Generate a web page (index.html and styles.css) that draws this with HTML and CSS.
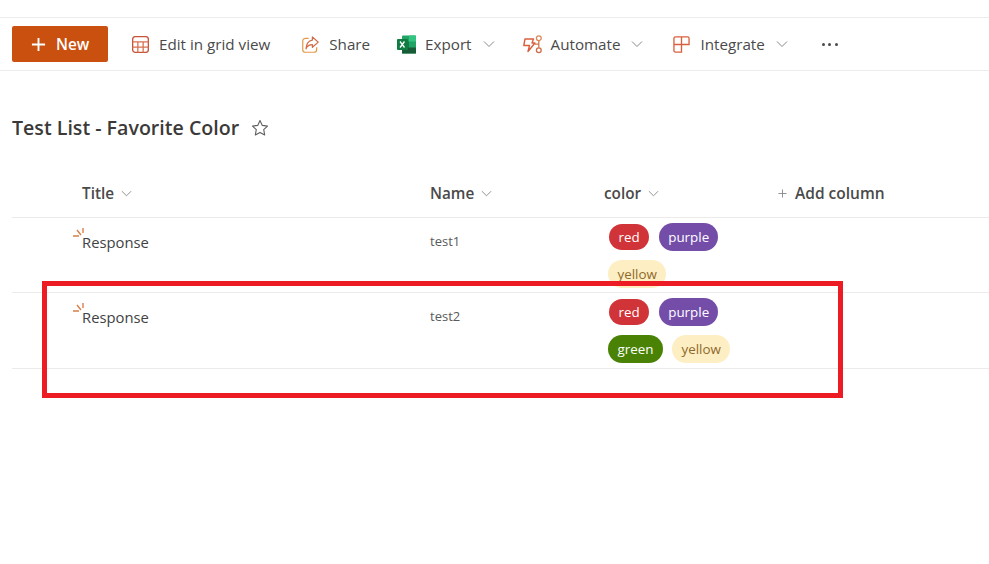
FILE: index.html
```html
<!DOCTYPE html>
<html lang="en">
<head>
<meta charset="utf-8">
<title>Test List - Favorite Color</title>
<link rel="stylesheet" href="styles.css">
</head>
<body>
<div class="page">
  <div class="toolbar">
    <button class="new-btn">
      <svg class="plus" viewBox="0 0 16 16"><path d="M8 1v14M1 8h14"/></svg>
      <span>New</span>
    </button>
    <div class="tool tool-grid">
      <svg class="ic" viewBox="1 1 16 16" fill="none"><rect x="1.600" y="1.600" width="14.800" height="14.800" rx="2.500" stroke="#c8553a" stroke-width="1.300"/><path d="M1.500 6.500h15M1.500 11.500h15M6.500 6.500v10M11.500 6.500v10" stroke="#d9714f" stroke-width="1.200"/></svg>
      <span>Edit in grid view</span>
    </div>
    <div class="tool tool-share">
      <svg class="ic" viewBox="0 0 18 18" fill="none"><path d="M7 2.500H3.500A2.700 2.700 0 0 0 .8 5.200v9.300a2.700 2.700 0 0 0 2.700 2.700h9.300a2.700 2.700 0 0 0 2.700-2.700V12" stroke="#e39a4a" stroke-width="1.300"/><path d="M11 1l6.200 5.500L11 12V9.200C8 9.200 5.500 10.500 4.300 13.500 4.500 8.500 7 5 11 4.300z" stroke="#cf6a45" stroke-width="1.300" stroke-linejoin="round"/></svg>
      <span>Share</span>
    </div>
    <div class="tool tool-export">
      <svg class="ic ic-xl" viewBox="0 0 19 19"><rect x="5" y="0.500" width="14" height="18" rx="1" fill="#21a366"/><rect x="12" y="0.500" width="7" height="6" fill="#33c481"/><rect x="5" y="6.500" width="7" height="6" fill="#107c41"/><rect x="12" y="12.500" width="7" height="6" fill="#185c37"/><rect x="5" y="12.500" width="7" height="6" fill="#185c37"/><rect x="0" y="4" width="11" height="11" rx="1" fill="#107c41"/><path d="M3 6.500l4.500 6M7.500 6.500l-4.500 6" stroke="#fff" stroke-width="1.300"/></svg>
      <span>Export</span>
      <svg class="chev" viewBox="0 0 12 12"><path d="M1 3.500l5 5 5-5"/></svg>
    </div>
    <div class="tool tool-auto">
      <svg class="ic ic-auto" viewBox="0 0 19 19" fill="none"><path d="M2 4h8.500L9 8h3l-7 8.500 1.500-6H.8z" stroke="#d9603f" stroke-width="1.400" stroke-linejoin="round"/><circle cx="15.800" cy="3.200" r="2.400" stroke="#d98a5a" stroke-width="1.300"/><circle cx="15.800" cy="15.200" r="2.400" stroke="#cf6a45" stroke-width="1.300"/><path d="M15.800 5.600v7.200M15.800 9.200h-4" stroke="#cf7a50" stroke-width="1.300"/></svg>
      <span>Automate</span>
      <svg class="chev" viewBox="0 0 12 12"><path d="M1 3.500l5 5 5-5"/></svg>
    </div>
    <div class="tool tool-integrate">
      <svg class="ic" viewBox="0 0 18 18" fill="none"><path d="M2.500 1h13a1.500 1.500 0 0 1 1.500 1.500V9H9v8H2.500A1.500 1.500 0 0 1 1 15.500v-13A1.500 1.500 0 0 1 2.500 1z" stroke="#d9603f" stroke-width="1.400"/><path d="M9 1v8H1" stroke="#d9603f" stroke-width="1.400"/></svg>
      <span>Integrate</span>
      <svg class="chev" viewBox="0 0 12 12"><path d="M1 3.500l5 5 5-5"/></svg>
    </div>
    <div class="tool tool-more" aria-label="More"><i></i><i></i><i></i></div>
  </div>

  <div class="heading">
    <h1>Test List - Favorite Color</h1>
    <svg class="star" viewBox="0 0 18 18" fill="none"><path d="M9 1.500l2.300 4.900 5.200.700-3.800 3.600 1 5.300L9 13.400 4.300 16l1-5.300L1.500 7.100l5.200-.700z" stroke="#605e5c" stroke-width="1.100" stroke-linejoin="round"/></svg>
  </div>

  <div class="list">
    <div class="row head">
      <div class="cell">Title <svg class="chev" viewBox="0 0 12 12"><path d="M1 3.500l5 5 5-5"/></svg></div>
      <div class="cell">Name <svg class="chev" viewBox="0 0 12 12"><path d="M1 3.500l5 5 5-5"/></svg></div>
      <div class="cell">color <svg class="chev" viewBox="0 0 12 12"><path d="M1 3.500l5 5 5-5"/></svg></div>
      <div class="cell add"><svg class="add-plus" viewBox="0 0 10 10"><path d="M5 0.500v9M0.500 5h9"/></svg> Add column</div>
    </div>
    <div class="row item">
      <div class="cell title">
        <svg class="spark" viewBox="0 0 11 11"><path d="M0 8h6M4 2l4 5M10 0v5"/></svg>
        <span>Response</span>
      </div>
      <div class="cell name">test1</div>
      <div class="cell pills">
        <span class="pill red">red</span><span class="pill purple">purple</span><span class="pill yellow">yellow</span>
      </div>
    </div>
    <div class="row item">
      <div class="cell title">
        <svg class="spark" viewBox="0 0 11 11"><path d="M0 8h6M4 2l4 5M10 0v5"/></svg>
        <span>Response</span>
      </div>
      <div class="cell name">test2</div>
      <div class="cell pills">
        <span class="pill red">red</span><span class="pill purple">purple</span><span class="pill green">green</span><span class="pill yellow">yellow</span>
      </div>
    </div>
  </div>
  <div class="highlight"></div>
</div>
</body>
</html>
```

FILE: styles.css
```css
* { box-sizing: border-box; }
html, body { margin: 0; padding: 0; background: #fff; }
body { font-family: "Open Sans", "Noto Sans", sans-serif; color: #323130; }
.page { position: relative; width: 989px; height: 564px; overflow: hidden; padding-top: 17px; }

.toolbar {
  display: flex; align-items: center; height: 54px;
  padding-left: 12px;
  border-top: 1px solid #ececec; border-bottom: 1px solid #ececec;
  font-size: 15.200px; color: #4a4a4a;
}
.new-btn {
  display: flex; align-items: center; gap: 10px;
  width: 96px; height: 36px; padding: 0 0 0 19px;
  background: #ca5010; color: #fff; border: 0; border-radius: 2px;
  font: 600 15.300px "Open Sans", sans-serif;
}
.plus { width: 15px; height: 15px; fill: none; stroke: #fff; stroke-width: 2; }
.tool { display: flex; align-items: center; gap: 10px; }
.ic { width: 17px; height: 17px; flex: none; }
.ic-xl, .ic-auto { width: 19px; height: 19px; }
.chev { width: 12px; height: 12px; fill: none; stroke: #8a8886; stroke-width: 1; flex: none; }
.tool .chev { margin-left: 1px; }
.tool-export, .tool-auto { gap: 9px; }
.tool-export .chev, .tool-auto .chev { margin-left: 2px; }
.tool-grid { margin-left: 24px; }
.tool-share { margin-left: 32px; }
.tool-export { margin-left: 27px; }
.tool-auto { margin-left: 28px; }
.tool-integrate { margin-left: 30px; }
.tool-more { margin-left: 34px; gap: 3.500px; }
.tool-more i { width: 3px; height: 3px; border-radius: 50%; background: #4a4a4a; }

.heading { display: flex; align-items: center; gap: 12px; padding: 34px 0 0 12px; height: 80px; }
h1 { margin: 0; font-size: 19.600px; font-weight: 600; line-height: 28px; color: #3b3a39; }
.star { width: 18px; height: 18px; }

.list { margin: 0 0 0 12px; }
.row { display: grid; grid-template-columns: 348px 174px 174px 1fr; padding-left: 70px; border-bottom: 1px solid #edebe9; }
.head { height: 67px; padding-top: 18px; align-items: center; font-size: 15.300px; font-weight: 600; color: #4a4a4a; }
.head .cell { display: flex; align-items: center; gap: 7px; }
.head .add { gap: 8px; font-size: 15.500px; }
.head .chev { width: 11px; height: 11px; }
.add-plus { width: 9px; height: 9px; fill: none; stroke: #8a8886; stroke-width: 1; }
.item { height: 75px; }
.item:last-child { height: 76px; }
.title { position: relative; padding-top: 14px; font-size: 14.800px; line-height: 20px; color: #424242; }
.spark { position: absolute; left: -9px; top: 10px; width: 11px; height: 11px; fill: none; stroke: #d9804a; stroke-width: 1.400; }
.name { padding-top: 14px; font-size: 13px; line-height: 18px; color: #5a5a5a; }
.pills { display: flex; flex-wrap: wrap; align-content: flex-start; gap: 9px; padding: 5px 0 0 4px; width: 160px; }
.pill { display: block; height: 28px; padding: 0 9.500px; border-radius: 14px; font-size: 13.400px; line-height: 29px; color: #fff; }
.red { height: 26px; line-height: 27px; margin: 1px; background: #d13438; }
.purple { background: #744da9; padding: 0 9px; }
.green { background: #498205; }
.yellow { background: #fdeec4; color: #8f6a2a; }

.highlight { position: absolute; left: 42px; top: 281px; width: 801px; height: 117px; border: 5px solid #ed1c24; }
```
